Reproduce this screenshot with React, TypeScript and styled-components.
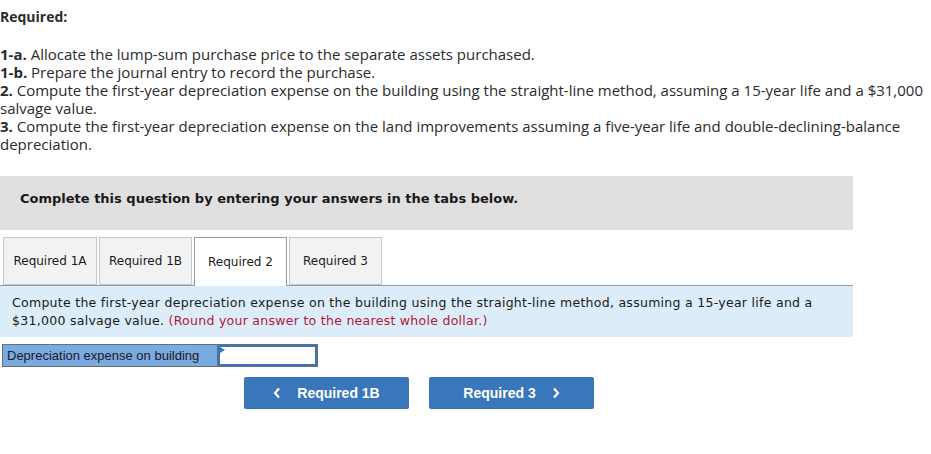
import React, { useState } from 'react';
import styled, { createGlobalStyle } from 'styled-components';

const GlobalStyle = createGlobalStyle`
  html, body {
    margin: 0;
    padding: 0;
    background: #ffffff;
  }
`;

const Page = styled.div`
  width: 931px;
  height: 454px;
  overflow: hidden;
  color: #222;
`;

const Intro = styled.div`
  font-family: "Open Sans", "Liberation Sans", sans-serif;
  font-size: 15px;
  line-height: 18px;
  color: #2b2b2b;
  padding-right: 8px;
`;

const Heading = styled.div`
  font-weight: 700;
  font-size: 14px;
  margin: 8px 0 19px;
`;

const Item = styled.div`
  b {
    font-weight: 700;
  }
`;

const Banner = styled.div`
  margin: 23px 78px 0 0;
  height: 54px;
  box-sizing: border-box;
  background: #e0e0e0;
  display: flex;
  align-items: center;
  padding: 0 0 10px 20px;
  font-family: "DejaVu Sans", Verdana, sans-serif;
  font-size: 13px;
  font-weight: 700;
  color: #1a1a1a;
`;

const TabBar = styled.div`
  display: flex;
  align-items: flex-end;
  margin-top: 7px;
  padding-left: 3px;
  gap: 2px;
`;

const Tab = styled.button<{ $active?: boolean; $w: number }>`
  width: ${p => p.$w}px;
  height: ${p => (p.$active ? '49px' : '48px')};
  margin-bottom: ${p => (p.$active ? '-1px' : '0')};
  padding: 0;
  background: ${p => (p.$active ? '#ffffff' : '#f2f2f2')};
  border: 1px solid ${p => (p.$active ? '#9a9a9a' : '#c8c8c8')};
  border-bottom: ${p => (p.$active ? 'none' : '1px solid #c8c8c8')};
  font-family: "DejaVu Sans", Verdana, sans-serif;
  font-size: 12px;
  color: #1a1a1a;
  cursor: pointer;
  position: relative;
  z-index: ${p => (p.$active ? 1 : 0)};
`;

const Panel = styled.div`
  margin-right: 78px;
  border-top: 1px solid #9a9a9a;
  background: #dcecf8;
  padding: 8px 12px 7px;
  font-family: "DejaVu Sans", Verdana, sans-serif;
  font-size: 12.5px;
  letter-spacing: 0.28px;
  line-height: 18px;
  color: #1a1a1a;
`;

const Hint = styled.span`
  color: #b0183c;
`;

const AnswerRow = styled.div`
  display: flex;
  margin: 7px 0 0 2px;
  width: 316px;
  height: 23px;
  border: 1px solid #6e6e6e;
  box-sizing: border-box;
`;

const AnswerLabel = styled.div`
  width: 215px;
  box-sizing: border-box;
  background: #7aaae2;
  border-right: 1px solid #6e6e6e;
  display: flex;
  align-items: center;
  padding-left: 4px;
  font-family: "Liberation Sans", Arial, sans-serif;
  font-size: 13px;
  color: #1a1a1a;
`;

const AnswerCell = styled.div`
  flex: 1;
  position: relative;
  border: 2px solid #3b74ba;
  background: #fff;
`;

const AnswerInput = styled.input`
  width: 100%;
  height: 100%;
  box-sizing: border-box;
  border: none;
  outline: none;
  padding: 0 4px;
  font-family: "Liberation Sans", Arial, sans-serif;
  font-size: 12px;
  background: transparent;
`;

const Marker = styled.span`
  position: absolute;
  left: 0;
  top: 0;
  width: 0;
  height: 0;
  border-top: 3px solid transparent;
  border-bottom: 3px solid transparent;
  border-left: 5px solid #3b74ba;
`;

const NavRow = styled.div`
  display: flex;
  gap: 20px;
  margin: 10px 0 0 244px;
`;

const NavButton = styled.button`
  width: 165px;
  height: 32px;
  border: none;
  border-radius: 2px;
  background: #3a76bb;
  color: #fff;
  font-family: "Liberation Sans", Arial, sans-serif;
  font-size: 14px;
  font-weight: 700;
  display: flex;
  align-items: center;
  justify-content: center;
  gap: 16px;
  cursor: pointer;
`;

const Chevron = ({ dir }: { dir: 'left' | 'right' }) => (
  <svg width="8" height="12" viewBox="0 0 8 12" aria-hidden="true">
    <path
      d={dir === 'left' ? 'M6 1.5 L2 6 L6 10.5' : 'M2 1.5 L6 6 L2 10.5'}
      fill="none"
      stroke="#fff"
      strokeWidth="2.2"
    />
  </svg>
);

const tabs = [
  { label: 'Required 1A', w: 94 },
  { label: 'Required 1B', w: 93 },
  { label: 'Required 2', w: 93 },
  { label: 'Required 3', w: 93 },
];

const App: React.FC = () => {
  const [active, setActive] = useState(2);
  const [value, setValue] = useState('');

  return (
    <Page>
      <GlobalStyle />
      <Intro>
        <Heading>Required:</Heading>
        <Item><b>1-a.</b> Allocate the lump-sum purchase price to the separate assets purchased.</Item>
        <Item><b>1-b.</b> Prepare the journal entry to record the purchase.</Item>
        <Item>
          <b>2.</b> Compute the first-year depreciation expense on the building using the straight-line method, assuming a 15-year life and a $31,000 salvage value.
        </Item>
        <Item>
          <b>3.</b> Compute the first-year depreciation expense on the land improvements assuming a five-year life and double-declining-balance depreciation.
        </Item>
      </Intro>

      <Banner>Complete this question by entering your answers in the tabs below.</Banner>

      <TabBar>
        {tabs.map((t, i) => (
          <Tab key={t.label} $w={t.w} $active={i === active} onClick={() => setActive(i)}>
            {t.label}
          </Tab>
        ))}
      </TabBar>

      <Panel>
        Compute the first-year depreciation expense on the building using the straight-line method, assuming a 15-year life and a $31,000 salvage value.{' '}
        <Hint>(Round your answer to the nearest whole dollar.)</Hint>
      </Panel>

      <AnswerRow>
        <AnswerLabel>Depreciation expense on building</AnswerLabel>
        <AnswerCell>
          <Marker />
          <AnswerInput value={value} onChange={e => setValue(e.target.value)} />
        </AnswerCell>
      </AnswerRow>

      <NavRow>
        <NavButton onClick={() => setActive(1)}>
          <Chevron dir="left" />
          Required 1B
        </NavButton>
        <NavButton onClick={() => setActive(3)}>
          Required 3
          <Chevron dir="right" />
        </NavButton>
      </NavRow>
    </Page>
  );
};

export default App;
